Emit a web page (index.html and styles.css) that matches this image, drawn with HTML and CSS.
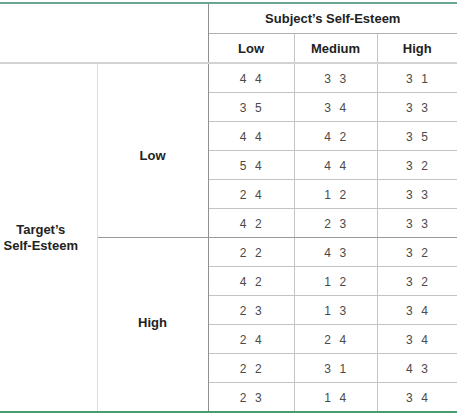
FILE: index.html
```html
<!DOCTYPE html>
<html>
<head>
<meta charset="utf-8">
<link rel="stylesheet" href="styles.css">
</head>
<body>
<div class="wrap">
<table class="grid">
  <colgroup>
    <col class="c-a"><col class="c-b"><col class="c-low"><col class="c-med"><col class="c-high">
  </colgroup>
  <thead>
    <tr class="h1">
      <th class="corner" colspan="2" rowspan="2"></th>
      <th class="subject" colspan="3">Subject’s Self-Esteem</th>
    </tr>
    <tr class="h2">
      <th class="sub vline">Low</th>
      <th class="sub vline">Medium</th>
      <th class="sub">High</th>
    </tr>
  </thead>
  <tbody>
    <tr>
      <th class="target" rowspan="12">Target’s<br>Self-Esteem</th>
      <th class="group g-low" rowspan="6">Low</th>
      <td class="vline">4 4</td><td class="vline">3 3</td><td>3 1</td>
    </tr>
    <tr><td class="vline">3 5</td><td class="vline">3 4</td><td>3 3</td></tr>
    <tr><td class="vline">4 4</td><td class="vline">4 2</td><td>3 5</td></tr>
    <tr><td class="vline">5 4</td><td class="vline">4 4</td><td>3 2</td></tr>
    <tr><td class="vline">2 4</td><td class="vline">1 2</td><td>3 3</td></tr>
    <tr class="sep"><td class="vline">4 2</td><td class="vline">2 3</td><td>3 3</td></tr>
    <tr>
      <th class="group g-high" rowspan="6">High</th>
      <td class="vline">2 2</td><td class="vline">4 3</td><td>3 2</td>
    </tr>
    <tr><td class="vline">4 2</td><td class="vline">1 2</td><td>3 2</td></tr>
    <tr><td class="vline">2 3</td><td class="vline">1 3</td><td>3 4</td></tr>
    <tr><td class="vline">2 4</td><td class="vline">2 4</td><td>3 4</td></tr>
    <tr><td class="vline">2 2</td><td class="vline">3 1</td><td>4 3</td></tr>
    <tr class="last"><td class="vline">2 3</td><td class="vline">1 4</td><td>3 4</td></tr>
  </tbody>
</table>
</div>
</body>
</html>
```
FILE: styles.css
```css
html, body {
  margin: 0;
  padding: 0;
  background: #ffffff;
}
.wrap {
  padding-top: 2px;
  width: 457px;
}
.grid {
  width: 457px;
  border-collapse: collapse;
  table-layout: fixed;
  font-family: "Liberation Sans", Arial, sans-serif;
  color: #222;
  border-top: 2px solid #6aa594;
  border-bottom: 2px solid #4b9b72;
}
.c-a { width: 97px; }
.c-b { width: 111px; }
.c-low { width: 86px; }
.c-med { width: 83px; }
.c-high { width: 80px; }

th, td {
  padding: 0;
  text-align: center;
  vertical-align: middle;
}
th {
  font-weight: bold;
  font-size: 13px;
  color: #222;
}
.h1 th { height: 29px; }
.h2 th { height: 28px; }
.corner {
  border-right: 1px solid #8f8f8f;
  border-bottom: 2px solid #d2d2d2;
}
.subject {
  border-bottom: 1px solid #b0b0b0;
}
.sub {
  border-bottom: 2px solid #d2d2d2;
}
.vline {
  border-right: 1px solid #c4c4c4;
}
td {
  height: 26px;
  font-size: 12px;
  letter-spacing: 2.6px;
  color: #4a4a4a;
  border-bottom: 1px solid #c4c4c4;
  padding-top: 2px;
  padding-left: 2px;
}
.last td { border-bottom: none; }
.target {
  border-right: 1px solid #dedede;
  padding-right: 15px;
  line-height: 16px;
}
.group {
  border-right: 1px solid #8f8f8f;
}
.g-low {
  border-bottom: 1px solid #9a9a9a;
  padding-top: 9px;
}
.g-high {
  padding-bottom: 5px;
}
.sep td {
  border-bottom: 1px solid #9a9a9a;
}
```
